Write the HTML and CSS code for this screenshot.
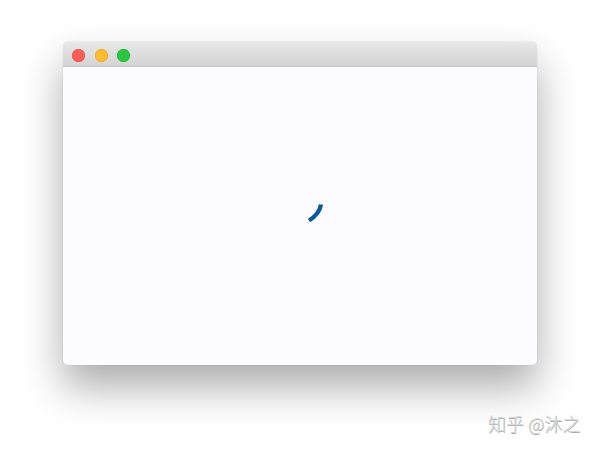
FILE: index.html
```html
<!DOCTYPE html>
<html>
<head>
<meta charset="utf-8">
<link rel="stylesheet" href="styles.css">
</head>
<body>
<div class="stage">
  <div class="window">
    <div class="titlebar">
      <span class="light red"></span>
      <span class="light yellow"></span>
      <span class="light green"></span>
    </div>
    <div class="content">
      <svg class="spinner" width="30" height="30" viewBox="0 0 30 30">
        <path d="M 26 6.5 Q 24.5 16 14 22.5" fill="none" stroke="#0a5aa0" stroke-width="4.3" stroke-linecap="butt"/>
      </svg>
    </div>
  </div>
  <div class="watermark">知乎 @沐之</div>
</div>
</body>
</html>
```
FILE: styles.css
```css
html, body {
  margin: 0;
  padding: 0;
  background: #ffffff;
}
.stage {
  position: relative;
  width: 600px;
  height: 449px;
  overflow: hidden;
  padding: 42px 0 0 63px;
  box-sizing: border-box;
}
.window {
  width: 474px;
  height: 323px;
  border-radius: 5px;
  overflow: hidden;
  display: flex;
  flex-direction: column;
  box-shadow: 0 22px 42px rgba(0,0,0,0.33), 0 0 1px rgba(0,0,0,0.35);
  background: #fcfcfe;
}
.titlebar {
  height: 25px;
  flex: none;
  display: flex;
  align-items: center;
  gap: 9.5px;
  padding: 2px 0 0 9px;
  background: linear-gradient(#e8e8e8, #d4d4d4);
  border-bottom: 1px solid #c6c6c6;
  box-sizing: border-box;
}
.light {
  width: 13px;
  height: 13px;
  border-radius: 50%;
  display: block;
}
.red { background: #fd5d56; box-shadow: inset 0 0 0 0.5px #e0443e; }
.yellow { background: #fdbc2e; box-shadow: inset 0 0 0 0.5px #dea123; }
.green { background: #28c73f; box-shadow: inset 0 0 0 0.5px #1aab29; }
.content {
  flex: 1;
  display: flex;
  align-items: center;
  justify-content: center;
  padding: 0 0 6px 20px;
  background: #fcfcfe;
}
.spinner {
  display: block;
}
.watermark {
  position: absolute;
  left: 488px;
  top: 410px;
  font-family: "Noto Sans CJK SC", "Noto Sans", sans-serif;
  font-size: 18px;
  font-weight: 300;
  color: #d6d6d6;
  text-shadow: 0.6px 0.6px 0 #a8a8a8;
  white-space: nowrap;
}
```
